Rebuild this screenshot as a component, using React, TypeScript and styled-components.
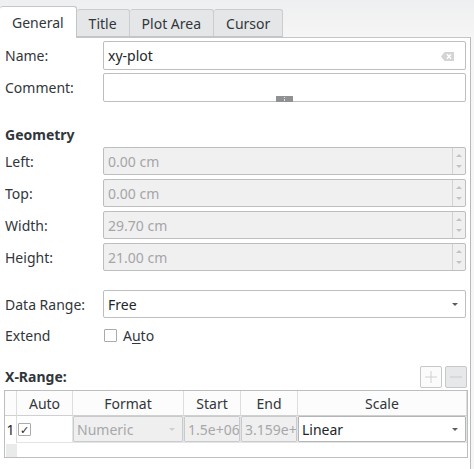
import React from 'react';
import styled, { createGlobalStyle } from 'styled-components';

const GlobalStyle = createGlobalStyle`
    html, body {
        margin: 0;
        padding: 0;
        background: #eff0f1;
    }
    body {
        font-family: "Noto Sans", "Open Sans", sans-serif;
        font-size: 14px;
        color: #31363b;
    }
`

const Window = styled.div`
    width: 474px;
    height: 469px;
    overflow: hidden;
    display: flex;
    flex-direction: column;
    background: linear-gradient(#eeeff0, #f6f6f6 40px);
`

const TabBar = styled.div`
    height: 37px;
    display: flex;
    align-items: flex-end;
    position: relative;
    z-index: 1;
`

const Tab = styled.div<{ $active?: boolean }>`
    box-sizing: border-box;
    height: ${p => (p.$active ? '32px' : '28px')};
    margin-bottom: ${p => (p.$active ? '-1px' : '0')};
    padding: 0 12px;
    display: flex;
    align-items: center;
    background: ${p => (p.$active ? '#ffffff' : '#e5e6e7')};
    border: 1px solid ${p => (p.$active ? '#c4c5c6' : '#cbcccd')};
    border-bottom: ${p => (p.$active ? 'none' : '1px solid #c4c5c6')};
    border-left: ${p => (p.$active ? 'none' : '0')};
    border-radius: 3px 3px 0 0;
    color: #31363b;
`

const Pane = styled.div`
    flex: 1;
    background: #ffffff;
    border-top: 1px solid #c4c5c6;
    border-right: 1px solid #b8b9ba;
    margin-right: 3px;
    padding: 3px 4px 0 5px;
    display: flex;
    flex-direction: column;
`

const Row = styled.div<{ $gap?: number }>`
    display: grid;
    grid-template-columns: 98px 1fr;
    align-items: center;
    margin-top: ${p => p.$gap ?? 0}px;
`

const Label = styled.span`
    color: #31363b;
    white-space: nowrap;
`

const Heading = styled.div<{ $top: number }>`
    font-weight: bold;
    margin-top: ${p => p.$top}px;
    height: 18px;
    line-height: 18px;
`

const Field = styled.div<{ $disabled?: boolean; $h?: number }>`
    position: relative;
    box-sizing: border-box;
    height: ${p => p.$h ?? 28}px;
    border: 1px solid #bcbebf;
    border-radius: 2px;
    background: ${p => (p.$disabled ? '#f0f0f0' : '#ffffff')};
    color: ${p => (p.$disabled ? '#a4a6a8' : '#232629')};
    display: flex;
    align-items: center;
    padding-left: 4px;
`

const FieldText = styled.span`
    flex: 1;
    min-width: 0;
    white-space: nowrap;
    overflow: hidden;
`

const ClearIcon = styled.svg`
    position: absolute;
    right: 11px;
    top: 10px;
`

const ResizeGrip = styled.div`
    position: absolute;
    left: 172px;
    bottom: -1px;
    width: 17px;
    height: 6px;
    background: #8f9193;
    display: flex;
    flex-direction: column;
    align-items: center;
    justify-content: space-evenly;
    & > i {
        width: 1px;
        height: 1px;
        background: #e0e0e0;
    }
`

const SpinButtons = styled.div`
    align-self: stretch;
    width: 12px;
    border-left: 1px solid #d2d3d4;
    display: flex;
    flex-direction: column;
    align-items: center;
    justify-content: space-around;
    padding: 2px 0;
`

const Arrow = styled.span<{ $up?: boolean; $color?: string; $size?: number }>`
    width: 0;
    height: 0;
    border-left: ${p => p.$size ?? 3}px solid transparent;
    border-right: ${p => p.$size ?? 3}px solid transparent;
    ${p => (p.$up ? 'border-bottom' : 'border-top')}: ${p => p.$size ?? 3}px solid ${p => p.$color ?? '#c2c3c4'};
`

const ComboArrow = styled.span`
    display: flex;
    align-items: center;
    padding: 0 7px;
`

const CheckRow = styled.label`
    display: flex;
    align-items: center;
    gap: 6px;
    height: 28px;
    & u {
        text-underline-offset: 2px;
    }
`

const Box = styled.span`
    box-sizing: border-box;
    width: 13px;
    height: 13px;
    margin-left: 1px;
    border: 1px solid #a9abad;
    border-radius: 1px;
    background: #fff;
    display: flex;
    align-items: center;
    justify-content: center;
    font-size: 11px;
    line-height: 1;
    color: #232629;
`

const RangeHeader = styled.div`
    display: flex;
    align-items: center;
    justify-content: space-between;
    margin-top: 17px;
    height: 22px;
    margin-right: -1px;
`

const ToolButtons = styled.div`
    display: flex;
    gap: 3px;
`

const ToolButton = styled.div<{ $pressed?: boolean }>`
    box-sizing: border-box;
    width: 22px;
    height: 22px;
    border: 1px solid #c6c7c8;
    border-radius: 2px;
    background: ${p => (p.$pressed ? '#e7e8e9' : '#fbfbfb')};
    display: flex;
    align-items: center;
    justify-content: center;
`

const Table = styled.div`
    box-sizing: border-box;
    margin-top: 2px;
    margin-left: -1px;
    width: 464px;
    height: 68px;
    border: 1px solid #bcbebf;
    display: grid;
    grid-template-columns: 12px 56px 111px 57px 57px 1fr;
    grid-template-rows: 25px 27px 1fr;
    background: #ffffff;
`

const HeaderCell = styled.div`
    border-right: 1px solid #dcdddd;
    border-bottom: 1px solid #cfd0d1;
    background: #fcfcfc;
    display: flex;
    align-items: center;
    justify-content: center;
    color: #31363b;
    &:last-child {
        border-right: none;
    }
`

const RowHead = styled.div`
    border-right: 1px solid #dcdddd;
    display: flex;
    align-items: center;
    justify-content: center;
    background: #ffffff;
    color: #232629;
`

const Cell = styled.div`
    min-width: 0;
    border-right: 1px solid #e3e4e5;
    border-bottom: 1px solid #e3e4e5;
    display: flex;
    align-items: center;
    overflow: hidden;
`

const CellEditor = styled.div<{ $disabled?: boolean }>`
    box-sizing: border-box;
    height: 26px;
    width: 100%;
    min-width: 0;
    border: 1px solid ${p => (p.$disabled ? '#c9cacb' : '#b3b5b6')};
    border-radius: 1px;
    background: ${p => (p.$disabled ? '#efefef' : '#ffffff')};
    color: ${p => (p.$disabled ? '#a6a8aa' : '#232629')};
    display: flex;
    align-items: center;
    padding-left: 3px;
    overflow: hidden;
`

const EmptyHead = styled.div`
    margin: 1px 0 0 1px;
    background: #e9eaea;
`

function SpinRow({ label, value, gap }: { label: string; value: string; gap: number }) {
    return (
        <Row $gap={gap}>
            <Label>{label}</Label>
            <Field $disabled>
                <FieldText>{value}</FieldText>
                <SpinButtons>
                    <Arrow $up />
                    <Arrow />
                </SpinButtons>
            </Field>
        </Row>
    )
}

export default function App() {
    return (
        <Window>
            <GlobalStyle />
            <TabBar>
                <Tab $active>General</Tab>
                <Tab>Title</Tab>
                <Tab>Plot Area</Tab>
                <Tab>Cursor</Tab>
            </TabBar>

            <Pane>
                <Row>
                    <Label>Name:</Label>
                    <Field $h={29}>
                        <FieldText>xy-plot</FieldText>
                        <ClearIcon width="13" height="9" viewBox="0 0 13 9">
                            <path d="M3.5 0H13V9H3.5L0 4.5Z" fill="#d3d4d5" />
                            <path d="M6 2.2L10 6.8M10 2.2L6 6.8" stroke="#ffffff" strokeWidth="1.4" />
                        </ClearIcon>
                    </Field>
                </Row>
                <Row $gap={3}>
                    <Label>Comment:</Label>
                    <Field $h={29}>
                        <ResizeGrip><i /><i /><i /></ResizeGrip>
                    </Field>
                </Row>

                <Heading $top={24}>Geometry</Heading>
                <SpinRow gap={3} label="Left:" value="0.00 cm" />
                <SpinRow gap={4} label="Top:" value="0.00 cm" />
                <SpinRow gap={4} label="Width:" value="29.70 cm" />
                <SpinRow gap={4} label="Height:" value="21.00 cm" />

                <Row $gap={19}>
                    <Label>Data Range:</Label>
                    <Field>
                        <FieldText>Free</FieldText>
                        <ComboArrow><Arrow $color="#5a5d60" /></ComboArrow>
                    </Field>
                </Row>
                <Row $gap={3}>
                    <Label>Extend</Label>
                    <CheckRow>
                        <Box />
                        <span>A<u>u</u>to</span>
                    </CheckRow>
                </Row>

                <RangeHeader>
                    <Heading $top={0}>X-Range:</Heading>
                    <ToolButtons>
                        <ToolButton>
                            <svg width="14" height="14" viewBox="0 0 14 14">
                                <path d="M7 1V13M1 7H13" stroke="#cfd0d1" strokeWidth="1" />
                            </svg>
                        </ToolButton>
                        <ToolButton $pressed>
                            <svg width="14" height="14" viewBox="0 0 14 14">
                                <path d="M1 7H13" stroke="#c9cacb" strokeWidth="1" />
                            </svg>
                        </ToolButton>
                    </ToolButtons>
                </RangeHeader>

                <Table>
                    <HeaderCell />
                    <HeaderCell>Auto</HeaderCell>
                    <HeaderCell>Format</HeaderCell>
                    <HeaderCell>Start</HeaderCell>
                    <HeaderCell>End</HeaderCell>
                    <HeaderCell>Scale</HeaderCell>

                    <RowHead>1</RowHead>
                    <Cell><Box>✓</Box></Cell>
                    <Cell>
                        <CellEditor $disabled>
                            <FieldText>Numeric</FieldText>
                            <ComboArrow><Arrow $color="#cfd0d1" /></ComboArrow>
                        </CellEditor>
                    </Cell>
                    <Cell><CellEditor $disabled><FieldText>1.5e+06</FieldText></CellEditor></Cell>
                    <Cell><CellEditor $disabled><FieldText>3.159e+06</FieldText></CellEditor></Cell>
                    <Cell>
                        <CellEditor>
                            <FieldText>Linear</FieldText>
                            <ComboArrow><Arrow $color="#5a5d60" /></ComboArrow>
                        </CellEditor>
                    </Cell>

                    <EmptyHead />
                </Table>
            </Pane>
        </Window>
    )
}
